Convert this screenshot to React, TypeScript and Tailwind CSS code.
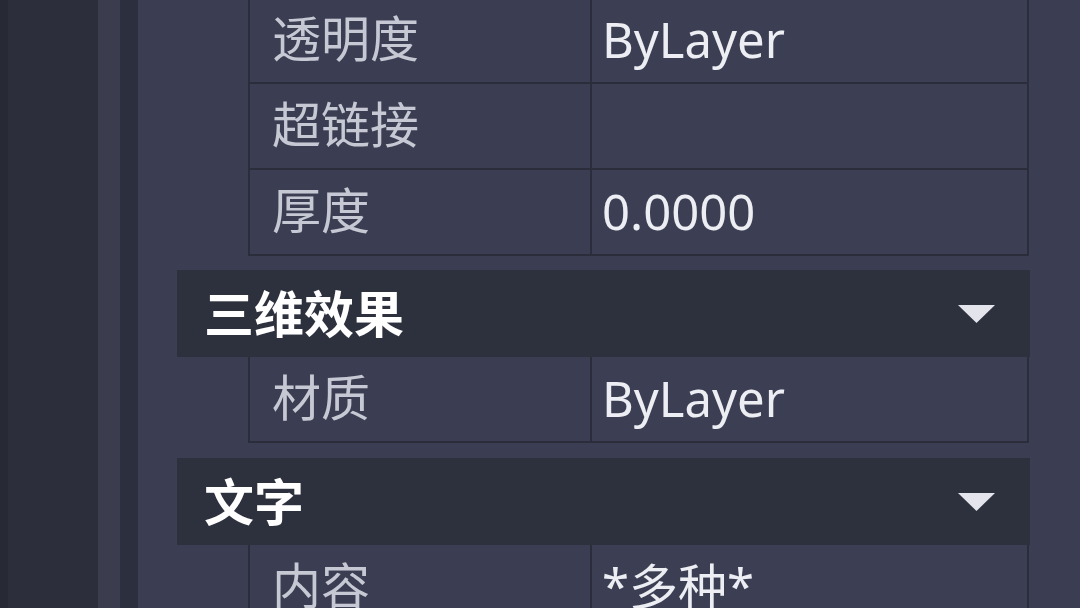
import React from "react";

const font = { fontFamily: '"Noto Sans", "Noto Sans CJK SC", sans-serif' };

function Row({ label, value }: { label: string; value?: string }) {
  return (
    <div className="grid grid-cols-[340px_1fr] gap-[2px] h-[84px]">
      <div className="bg-[#3b3e52] flex items-center pl-[22px] pb-[4px] text-[49px] text-[#c6c8d3] leading-none">
        {label}
      </div>
      <div className="bg-[#3c3f53] flex items-center pl-[10px] pb-[2px] text-[49px] text-[#eceef3] leading-none">
        {value}
      </div>
    </div>
  );
}

function Header({ title }: { title: string }) {
  return (
    <div className="ml-[39px] w-[853px] h-[87px] bg-[#2d303d] flex items-center justify-between pl-[27px] pr-[35px]">
      <span className="text-[50px] font-bold text-white leading-none">{title}</span>
      <svg width="37" height="20" viewBox="0 0 37 20">
        <polygon points="0,1 37,1 18.5,19" fill="#e4e5ec" />
      </svg>
    </div>
  );
}

export default function App() {
  return (
    <div className="w-[1080px] h-[608px] overflow-hidden flex bg-[#3b3e52]" style={font}>
      <div className="w-[8px] bg-[#272a34]" />
      <div className="w-[90px] bg-[#2c2f3b]" />
      <div className="w-[22px] bg-[#3b3d4f]" />
      <div className="w-[18px] bg-[#2c2f3d]" />
      <div className="flex-1 flex flex-col mt-[-4px]">
        <div className="ml-[110px] w-[781px] bg-[#2b2e3a] p-[2px] flex flex-col gap-[2px]">
          <Row label="透明度" value="ByLayer" />
          <Row label="超链接" />
          <Row label="厚度" value="0.0000" />
        </div>
        <div className="mt-[14px]">
          <Header title="三维效果" />
        </div>
        <div className="ml-[110px] w-[781px] bg-[#2b2e3a] px-[2px] pb-[2px] flex flex-col gap-[2px]">
          <Row label="材质" value="ByLayer" />
        </div>
        <div className="mt-[15px]">
          <Header title="文字" />
        </div>
        <div className="ml-[110px] w-[781px] bg-[#2b2e3a] px-[2px] pb-[2px] flex flex-col gap-[2px]">
          <Row label="内容" value="*多种*" />
        </div>
      </div>
    </div>
  );
}
